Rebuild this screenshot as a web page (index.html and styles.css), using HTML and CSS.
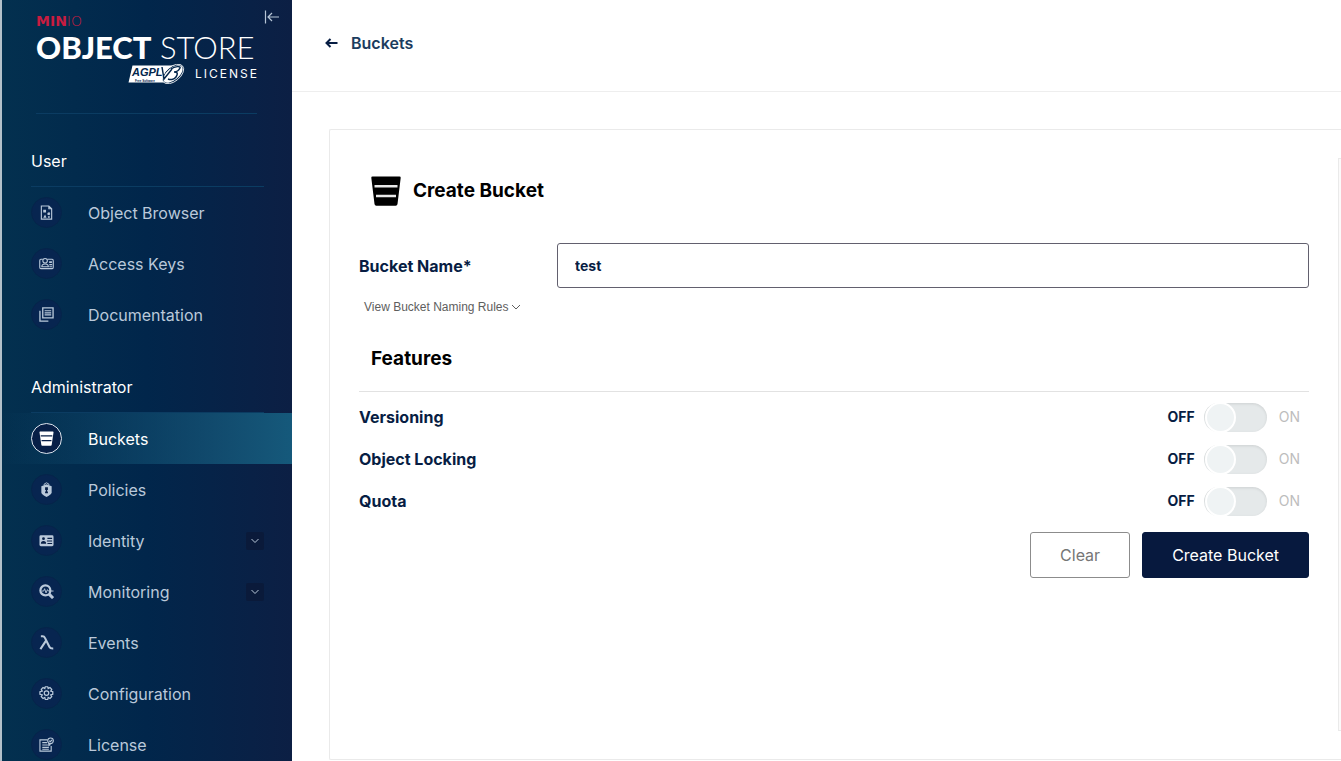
FILE: index.html
```html
<!DOCTYPE html>
<html lang="en">
<head>
    <meta charset="UTF-8">
    <meta name="viewport" content="width=device-width, initial-scale=1.0">
    <title>MinIO Console</title>
    <link rel="stylesheet" href="styles.css">
</head>
<body>
    <!-- Sidebar -->
    <aside class="sidebar">
        <button class="collapse-btn" type="button" aria-label="Collapse menu">
            <svg width="16" height="14" viewBox="0 0 16 14" fill="none" stroke="#b6c5d6" stroke-width="1.2"><path d="M1.5 0.5v13M15 7H4M8 3L4 7l4 4"/></svg>
        </button>
        <div class="logo">
            <div class="logo-brand"><b>MIN</b>IO</div>
            <div class="logo-name"><b>OBJECT</b> STORE</div>
            <div class="logo-license">
                <svg width="57" height="20" viewBox="0 0 57 20">
                    <path d="M4.500 1.500H47L42 18.500H0.500z" fill="#fff"/>
                    <text class="agpl" x="4" y="12">AGPL</text>
                    <text class="agpl-small" x="7" y="18">Free Software</text>
                    <ellipse cx="45" cy="10" rx="12" ry="6.500" transform="rotate(-40 45 10)" fill="#fff" stroke="#03264c" stroke-width="1"/>
                    <ellipse cx="45" cy="10" rx="12.500" ry="7.300" transform="rotate(-40 45 10)" fill="none" stroke="#fff" stroke-width=".8"/>
                    <path d="M34 3l2 12 8-10M43 5c4-3 10-3 9-1-1 2-3 4-6 4 4 0 4 2 2 5-2 3-6 3-8 2" fill="none" stroke="#03264c" stroke-width="1.500"/>
                </svg>
                <span>LICENSE</span>
            </div>
        </div>

        <nav>
            <h2 class="menu-title">User</h2>
            <ul class="menu">
                <li><a href="#"><span class="icon"><svg viewBox="0 0 16 16"><path d="M2.500 1h8L13.500 4v11h-11zM10.500 1v3h3" fill="none" stroke="currentColor" stroke-width="1.200"/><path d="M4.500 5h3v3h-3zM9 8.500l2-1 1 2-1 1.500-2-.5zM4.500 13.500L6.500 10l1.500 3.500zM9.500 12h2v1.500h-2z" fill="currentColor"/></svg></span>Object Browser</a></li>
                <li><a href="#"><span class="icon"><svg viewBox="0 0 16 16"><path d="M4 3.500H2Q.8 3.500.8 5v7q0 1.500 1.200 1.500h12q1.200 0 1.200-1.500V5q0-1.500-1.200-1.500H9" fill="none" stroke="currentColor" stroke-width="1.200"/><circle cx="6.500" cy="5" r="2.400" fill="none" stroke="currentColor" stroke-width="1.200"/><path d="M3 11.500q0-3 3.500-3t3.500 3z" fill="none" stroke="currentColor" stroke-width="1.200"/><path d="M10.800 5.500h3v2h-3zM11 8.500h3v1.300h-3zM11 10.800h3v1.300h-3z" fill="currentColor"/></svg></span>Access Keys</a></li>
                <li><a href="#"><span class="icon"><svg viewBox="0 0 16 16"><path d="M4 1h11v10.500H4zM1 4v11h9" fill="none" stroke="currentColor" stroke-width="1.400"/><path d="M6 4h7M6 6.200h7M6 8.400h7" stroke="currentColor" stroke-width="1.200"/></svg></span>Documentation</a></li>
            </ul>

            <h2 class="menu-title">Administrator</h2>
            <ul class="menu">
                <li><a href="#" class="active"><span class="icon"><svg viewBox="0 0 16 16"><path d="M.5 1.200q0-.7.800-.7h13.400q.8 0 .8.700L13.500 15q-.1.700-1 .7h-9q-.9 0-1-.7z" fill="currentColor"/><path d="M1.800 5.300h12.400M2.700 10.300h10.600" stroke="#071f47" stroke-width="1.300"/></svg></span>Buckets</a></li>
                <li><a href="#"><span class="icon"><svg viewBox="0 0 16 16"><path d="M8 2.500l5.500 2v6.500q0 2.500-5.500 5-5.500-2.500-5.500-5V4.500z" fill="currentColor"/><path d="M5.500 3.500V2.200Q8-.5 10.500 2.200v1.300" fill="none" stroke="currentColor"/><path d="M6.500 5.500h3v3h-3zM7.300 8h1.400v2H7.300zM6.500 10h3v2h-3z" fill="#071f47"/></svg></span>Policies</a></li>
                <li><a href="#"><span class="icon"><svg viewBox="0 0 16 16"><rect x=".5" y="2.500" width="15" height="11.500" rx="1.500" fill="currentColor"/><circle cx="4.800" cy="6" r="1.500" fill="#071f47"/><path d="M2 11.500q0-3 2.800-3t2.800 3zM9 5h5v1.500H9zM8.500 8h5.500v1H8.500zM9 10.700h5v1H9z" fill="#071f47"/></svg></span>Identity<span class="expand"><svg viewBox="0 0 10 10"><path d="M1.500 3L5 6.500 8.500 3"/></svg></span></a></li>
                <li><a href="#"><span class="icon"><svg viewBox="0 0 16 16"><circle cx="6.800" cy="6.800" r="5.300" fill="none" stroke="currentColor" stroke-width="2.400"/><path d="M10.500 10.500l4.500 4.500" stroke="currentColor" stroke-width="3.200"/><path d="M3 7.500h2l1-2.500 1.500 4.500L9 6l1 1.500h5.500" fill="none" stroke="currentColor" stroke-width="1"/></svg></span>Monitoring<span class="expand"><svg viewBox="0 0 10 10"><path d="M1.500 3L5 6.500 8.500 3"/></svg></span></a></li>
                <li><a href="#"><span class="icon"><svg viewBox="0 0 16 16"><path d="M2 1.300h2q1.500 0 2.200 1.500l5 10q.8 1.700 4 1.500M7.700 5.800L1.500 15" fill="none" stroke="currentColor" stroke-width="2.200"/></svg></span>Events</a></li>
                <li><a href="#"><span class="icon"><svg viewBox="0 0 16 16" fill="none" stroke="currentColor" stroke-width="1.300"><path d="M6.700.8h2.600l.5 2 1.900-1.100 1.900 1.900-1.100 1.900 2.200.6v2.800l-2.200.6 1.100 1.900-1.900 1.900-1.900-1.100-.5 2.200H6.700l-.5-2.200-1.900 1.100-1.900-1.900 1.100-1.900L1 8.900V6.100l2.500-.6-1.100-1.900 1.900-1.900 1.900 1.100z"/><circle cx="8" cy="7.500" r="2.400"/></svg></span>Configuration</a></li>
                <li><a href="#"><span class="icon"><svg viewBox="0 0 16 16" fill="none" stroke="currentColor" stroke-width="1.200"><path d="M9 3H1v12h12V9.500M3.500 6h5M3.500 8.500h6M3.500 11h7M3.500 13h7"/><circle cx="12.300" cy="4" r="3"/><path d="M11 4l1 1 2-2M10.500 6.500V9l1.800-1"/></svg></span>License</a></li>
            </ul>
        </nav>
    </aside>

    <!-- Main Section -->
    <div class="main-container">
        <header class="page-header">
            <a href="#" class="back-link">
                <svg width="13" height="10" viewBox="0 0 13 10" fill="none" stroke="#071d43" stroke-width="2"><path d="M12.500 5H2M5.500 1L1.500 5l4 4"/></svg>
                Buckets
            </a>
        </header>
        <main>
            <div class="card">
                <form class="bucket-form" onsubmit="return false">
                    <h1 class="form-title">
                        <svg width="30" height="30" viewBox="0 0 30 30"><path d="M.3 1.800Q.2.400 1.500.400h27q1.300 0 1.200 1.400L26.500 28q-.2 1.700-1.800 1.700H5.300q-1.600 0-1.800-1.700z"/><path d="M3.500 10.300h23M5 20h20" stroke="#e8e8e8" stroke-width="2.400"/></svg>
                        Create Bucket
                    </h1>
                    <div class="name-row">
                        <label for="bucketName">Bucket Name*</label>
                        <input type="text" id="bucketName" value="test" autocomplete="off">
                    </div>
                    <button type="button" class="rules-btn">View Bucket Naming Rules
                        <svg width="10" height="10" viewBox="0 0 10 10" fill="none" stroke="#5e5e5e"><path d="M1 3l4 4 4-4"/></svg>
                    </button>
                    <h2 class="features-title">Features</h2>
                    <div class="feature">
                        <label for="versioning">Versioning</label>
                        <span class="off">OFF</span>
                        <input type="checkbox" class="switch" id="versioning">
                        <span class="on">ON</span>
                    </div>
                    <div class="feature">
                        <label for="locking">Object Locking</label>
                        <span class="off">OFF</span>
                        <input type="checkbox" class="switch" id="locking">
                        <span class="on">ON</span>
                    </div>
                    <div class="feature">
                        <label for="quota">Quota</label>
                        <span class="off">OFF</span>
                        <input type="checkbox" class="switch" id="quota">
                        <span class="on">ON</span>
                    </div>
                    <div class="actions">
                        <button type="reset" class="btn">Clear</button>
                        <button type="submit" class="btn btn-primary">Create Bucket</button>
                    </div>
                </form>
                <div class="help-box"></div>
            </div>
        </main>
    </div>
</body>
</html>
```
FILE: styles.css
```css
/* Basic reset */
* {
    margin: 0;
    padding: 0;
    box-sizing: border-box;
}

body {
    display: flex;
    height: 100vh;
    overflow: hidden;
    font-family: Inter, "Liberation Sans", sans-serif;
    font-size: 16px;
    line-height: 20px;
    color: #071d43;
    background-color: #fff;
}

a {
    color: inherit;
    text-decoration: none;
}

button {
    font-family: inherit;
    cursor: pointer;
}

/* Sidebar */
.sidebar {
    position: relative;
    flex: 0 0 292px;
    overflow: hidden;
    border-left: 2px solid #b3c1ca;
    background: linear-gradient(90deg, #03304f 0%, #01264b 50%, #0c1f44 100%);
    color: #fff;
}

.collapse-btn {
    position: absolute;
    top: 10px;
    right: 12px;
    height: 14px;
    border: none;
    background: none;
}

.collapse-btn svg {
    display: block;
}

.logo {
    margin: 0 35px 0 34px;
    padding-top: 13px;
    height: 114px;
    border-bottom: 1px solid #0b3c62;
}

.logo-brand {
    font-family: "DejaVu Sans", sans-serif;
    font-size: 14px;
    line-height: 16px;
    color: #c81c40;
    font-weight: 200;
}

.logo-brand b {
    font-weight: 700;
}

.logo-name {
    font-family: Lato, sans-serif;
    font-size: 31px;
    line-height: 36px;
    font-weight: 300;
    white-space: nowrap;
}

.logo-name b {
    font-weight: 900;
}

.logo-license {
    display: flex;
    justify-content: flex-end;
    align-items: center;
    gap: 10px;
    height: 18px;
    font-size: 12px;
    letter-spacing: 2px;
}

.logo-license span {
    margin-right: -2px;
}

.agpl {
    font: italic bold 11px "Liberation Sans", sans-serif;
    letter-spacing: 0;
    fill: #03264c;
}

.agpl-small {
    font: bold 3px "Liberation Sans", sans-serif;
    letter-spacing: 0;
    fill: #03264c;
}

.menu-title {
    margin: 0 28px 0 29px;
    padding: 37px 0 15px;
    border-bottom: 1px solid #0b3c62;
    font-size: 16px;
    line-height: 20px;
    font-weight: 400;
}

.menu {
    list-style: none;
}

.menu a {
    display: flex;
    align-items: center;
    height: 51px;
    padding: 0 28px 0 29px;
    color: #bac9da;
}

.menu a.active {
    background: linear-gradient(90deg, transparent 0%, #15597b 100%);
    color: #fff;
}

.icon {
    display: flex;
    align-items: center;
    justify-content: center;
    width: 31px;
    height: 31px;
    margin-right: 26px;
    border: 1px solid #06244a;
    border-radius: 50%;
    background-color: #072550;
}

.active .icon {
    border-color: #dde5ee;
    background-color: #071f47;
}

.icon svg {
    width: 15px;
    height: 15px;
}

.expand {
    display: flex;
    align-items: center;
    justify-content: center;
    width: 18px;
    height: 18px;
    margin-left: auto;
    border-radius: 2px;
    background-color: #0a1a3a;
}

.expand svg {
    width: 10px;
    height: 10px;
    fill: none;
    stroke: #bac9da;
}

/* Main Section */
.main-container {
    flex: 1;
    min-width: 0;
    display: flex;
    flex-direction: column;
}

.page-header {
    display: flex;
    padding: 33px 33px 38px;
    border-bottom: 1px solid #eee;
}

.back-link {
    display: flex;
    align-items: center;
    gap: 13px;
    font-weight: 600;
    color: #1b3c5e;
}

main {
    flex: 1;
    display: flex;
    padding: 37px 0 1px 37px;
}

/* Card with the form and the help box on its right */
.card {
    flex: 1;
    display: flex;
    gap: 29px;
    padding: 28px 0 28px 29px;
    border: 1px solid #eaeaea;
    border-right: none;
    border-radius: 2px 0 0 2px;
}

.help-box {
    flex: 0 0 3px;
    border: 1px solid #eaeaea;
    border-right: none;
    background-color: #fbfafa;
}

.bucket-form {
    flex: 1;
    padding-top: 18px;
}

.form-title {
    display: flex;
    align-items: center;
    gap: 12px;
    height: 30px;
    margin: 0 0 37px 12px;
    font-size: 19px;
    color: #000;
}

.name-row {
    display: flex;
    align-items: center;
}

.name-row label {
    width: 198px;
    font-weight: 700;
}

.name-row input {
    flex: 1;
    height: 45px;
    padding: 0 17px;
    border: 1px solid #62606e;
    border-radius: 3px;
    font: 700 14px Inter, sans-serif;
    color: #071d43;
}

.rules-btn {
    display: flex;
    align-items: center;
    gap: 2px;
    height: 20px;
    margin: 9px 0 0 5px;
    border: none;
    background: none;
    font-family: "Liberation Sans", Arial, sans-serif;
    font-size: 12px;
    color: #5e5e5e;
}

.features-title {
    padding: 29px 12px 20px;
    margin-bottom: 4px;
    border-bottom: 1px solid #e2e2e2;
    font-size: 19px;
    line-height: 25px;
    color: #000;
}

.feature {
    display: flex;
    align-items: center;
    height: 42px;
    padding-right: 9px;
    font-size: 14px;
}

.feature label {
    flex: 1;
    font-size: 16px;
    font-weight: 700;
}

.off {
    font-weight: 700;
}

.on {
    color: #bdbdbd;
}

.switch {
    appearance: none;
    display: flex;
    align-items: center;
    width: 63px;
    height: 29px;
    margin: 0 12px 0 9px;
    padding: 0 1px;
    border-radius: 15px;
    background-color: #e5e9ea;
    box-shadow: inset 0 1px 3px rgba(0, 0, 0, 0.1);
}

.switch::before {
    content: "";
    width: 27px;
    height: 27px;
    border: 2px solid #fff;
    border-radius: 50%;
    background-color: #eff3f4;
}

.switch:checked::before {
    margin-left: auto;
}

.actions {
    display: flex;
    justify-content: flex-end;
    gap: 12px;
    margin-top: 10px;
}

.btn {
    height: 46px;
    padding: 0 29px;
    border: 1px solid #8c8c8c;
    border-radius: 3px;
    background-color: #fff;
    font-size: 16px;
    color: #767676;
}

.btn-primary {
    border-color: #07193e;
    background-color: #07193e;
    color: #fff;
}
```
